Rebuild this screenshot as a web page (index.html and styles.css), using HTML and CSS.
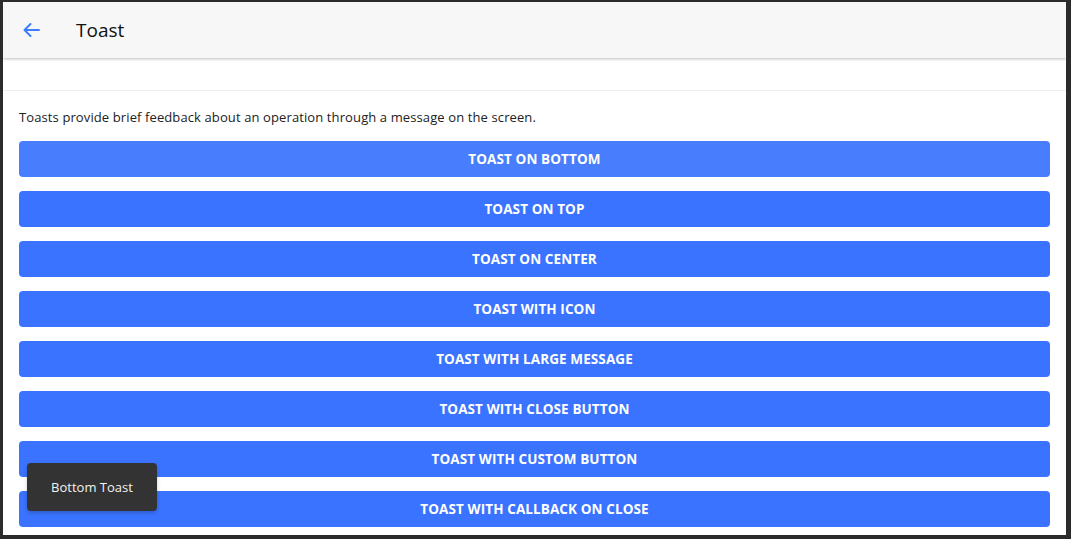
FILE: index.html
```html
<!DOCTYPE html>
<html>
<head>
<meta charset="utf-8">
<link rel="stylesheet" href="styles.css">
</head>
<body>
<div class="frame">
  <header class="toolbar">
    <span class="back">
      <svg width="18" height="16" viewBox="0 0 18 16"><path d="M17 8H2.5M8.5 2L2.5 8l6 6" fill="none" stroke="#3f7bff" stroke-width="2" stroke-linecap="round" stroke-linejoin="round"/></svg>
    </span>
    <h1 class="title">Toast</h1>
  </header>
  <div class="spacer"></div>
  <main class="content">
    <p class="intro">Toasts provide brief feedback about an operation through a message on the screen.</p>
    <div class="buttons">
      <button class="btn hover">Toast on bottom</button>
      <button class="btn">Toast on top</button>
      <button class="btn">Toast on center</button>
      <button class="btn">Toast with icon</button>
      <button class="btn">Toast with large message</button>
      <button class="btn">Toast with close button</button>
      <button class="btn">Toast with custom button</button>
      <button class="btn">Toast with callback on close</button>
    </div>
  </main>
  <div class="toast">Bottom Toast</div>
</div>
</body>
</html>
```
FILE: styles.css
```css
html, body {
  margin: 0;
  padding: 0;
  height: 100%;
}
body {
  background: #2b2b2b;
  font-family: "Open Sans", "Noto Sans", sans-serif;
  overflow: hidden;
}
.frame {
  position: relative;
  margin: 2px 5px 0 3px;
  height: 533px;
  background: #fff;
  overflow: hidden;
  display: flex;
  flex-direction: column;
}
.toolbar {
  height: 56px;
  flex: none;
  background: #f7f7f7;
  display: flex;
  align-items: center;
  box-shadow: 0 1px 3px rgba(0,0,0,0.25);
  position: relative;
  z-index: 1;
}
.back {
  width: 18px;
  height: 16px;
  margin-left: 19px;
  display: flex;
}
.title {
  margin: 0 0 0 36px;
  font-size: 19px;
  font-weight: 500;
  color: #111;
  letter-spacing: 0;
}
.spacer {
  height: 32px;
  flex: none;
  border-bottom: 1px solid #f0f0f0;
}
.content {
  padding: 0 16px;
}
.intro {
  margin: 17px 0 15px;
  font-size: 13px;
  color: #222;
  line-height: 18px;
  letter-spacing: 0.11px;
}
.buttons {
  display: flex;
  flex-direction: column;
  gap: 14px;
}
.btn {
  height: 36px;
  border: none;
  border-radius: 4px;
  background: #3a73ff;
  color: #fff;
  font-family: "Open Sans", "Noto Sans", sans-serif;
  font-size: 13.5px;
  font-weight: 700;
  text-transform: uppercase;
  letter-spacing: 0.1px;
  padding: 0;
}
.btn.hover {
  background: #487dfe;
}
.toast {
  position: absolute;
  left: 24px;
  top: 461px;
  width: 130px;
  height: 48px;
  background: #333;
  border-radius: 4px;
  color: #f2f2f2;
  font-size: 13px;
  display: flex;
  align-items: center;
  justify-content: center;
  box-shadow: 0 2px 4px rgba(0,0,0,0.2);
}
```
